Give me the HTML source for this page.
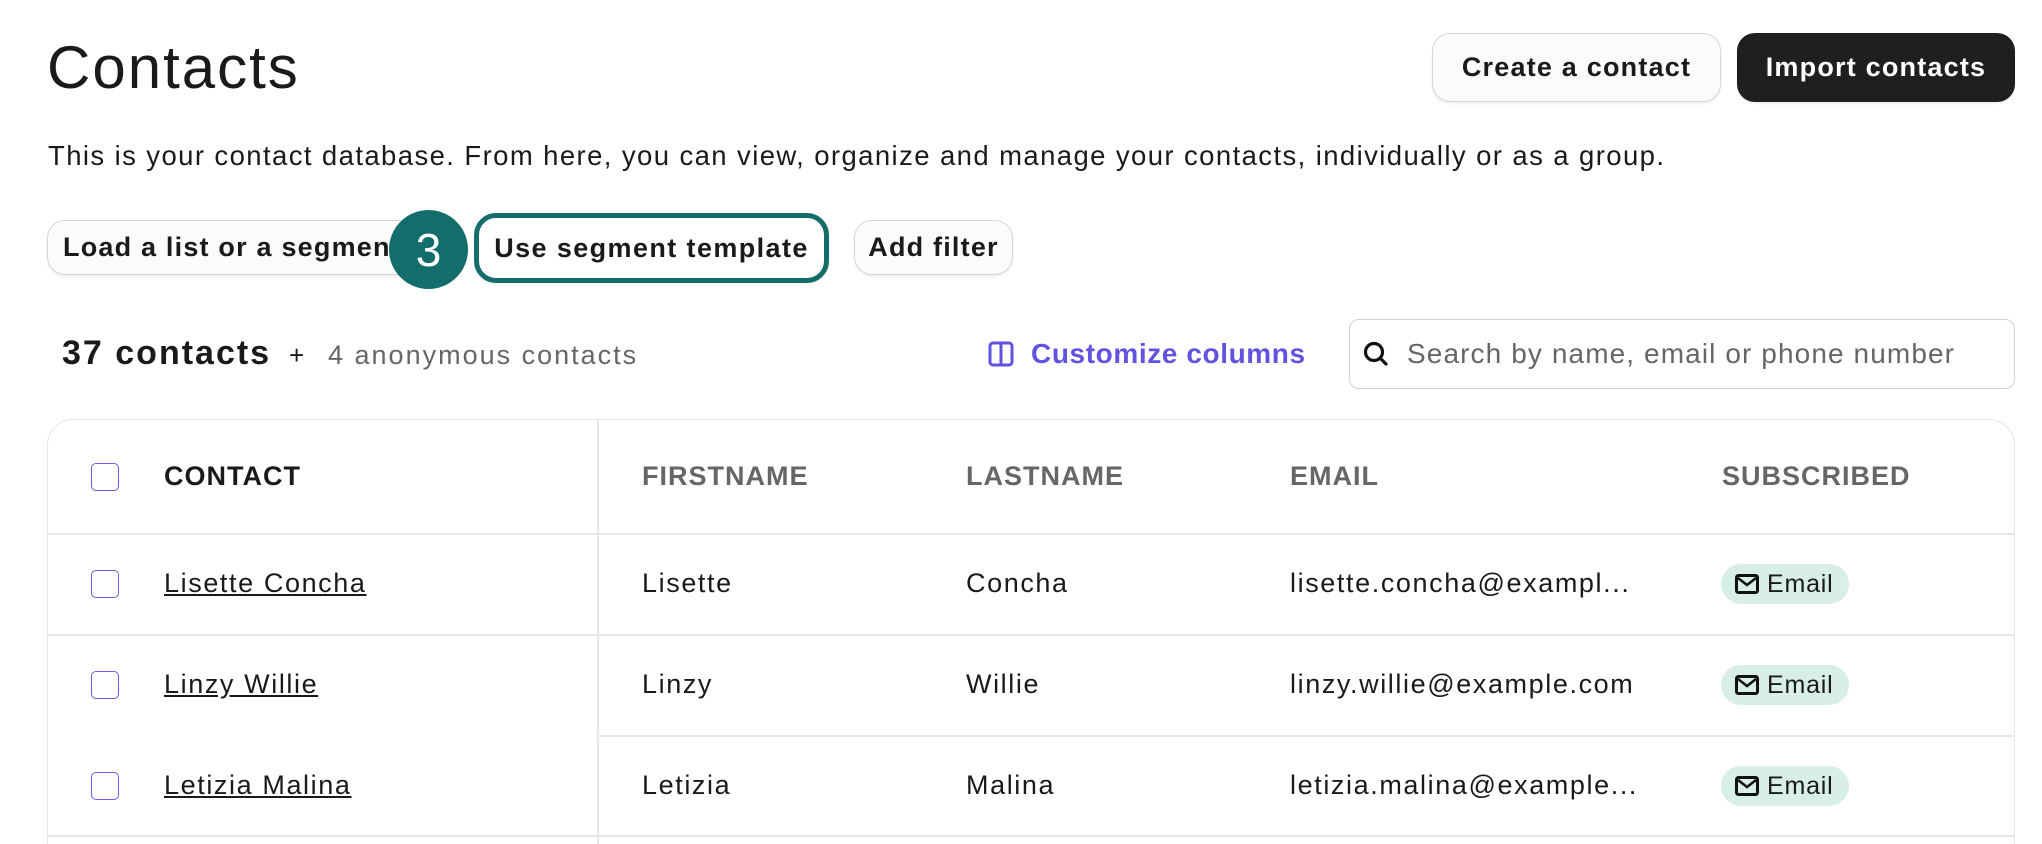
<!DOCTYPE html>
<html><head><meta charset="utf-8"><style>
*{box-sizing:border-box;margin:0;padding:0}
html,body{width:2042px;height:844px;overflow:hidden}
body{background:#fff;font-family:"Liberation Sans",Arial,sans-serif;color:#1a1a1a}
#w{position:relative;width:2042px;height:844px;overflow:hidden}
.a{position:absolute;white-space:nowrap}
.btn{position:absolute;border:1.5px solid #d6d6d6;border-radius:18px;background:#fbfbfb;font-weight:bold;font-size:27px;letter-spacing:1.2px;display:flex;align-items:center;justify-content:center;box-shadow:0 2px 2px rgba(0,0,0,.06);white-space:nowrap}
.cb{position:absolute;width:28px;height:28px;border:1.5px solid #6b5ce7;border-radius:5px;left:91px}
.h{position:absolute;top:461px;font-weight:bold;font-size:27px;color:#666;letter-spacing:1px}
.t{position:absolute;font-size:27px;letter-spacing:1.6px;white-space:nowrap}
.line{position:absolute;height:2px;background:#e6e6e6}
.badge{position:absolute;left:1721px;width:128px;height:40px;border-radius:20px;background:#d7efe6;font-size:25px;letter-spacing:0.8px;display:flex;align-items:center;padding-left:14px}
.badge svg{margin-right:8px}
</style></head><body><div id="w">
<div class="a" style="left:47px;top:33px;font-size:60px;letter-spacing:2px">Contacts</div>
<div class="btn" style="left:1432px;top:33px;width:289px;height:69px">Create a contact</div>
<div class="btn" style="left:1737px;top:33px;width:278px;height:69px;background:#1f1f1f;color:#fff;border-color:#1f1f1f">Import contacts</div>
<div class="a" style="left:48px;top:140px;font-size:27.5px;letter-spacing:1.4px">This is your contact database. From here, you can view, organize and manage your contacts, individually or as a group.</div>

<div class="btn" style="left:47px;top:220px;width:370px;height:55px;justify-content:flex-start;padding-left:15px;overflow:hidden">Load a list or a segment</div>
<div class="a" style="left:389px;top:210px;width:79px;height:79px;border-radius:50%;background:#136e6b;color:#fff;font-size:46px;display:flex;align-items:center;justify-content:center">3</div>
<div class="btn" style="left:474px;top:213px;width:355px;height:70px;border:5px solid #136e6b;border-radius:22px;background:#fff;letter-spacing:1.4px">Use segment template</div>
<div class="btn" style="left:854px;top:220px;width:159px;height:55px">Add filter</div>

<div class="a" style="left:62px;top:334px;font-size:34px;font-weight:bold;letter-spacing:2px">37 contacts</div>
<div class="a" style="left:289px;top:340px;font-size:26px">+</div>
<div class="a" style="left:328px;top:340px;font-size:27px;color:#666;letter-spacing:2px">4 anonymous contacts</div>
<svg class="a" style="left:988px;top:341px" width="26" height="26" viewBox="0 0 26 26"><rect x="2" y="2" width="22" height="22" rx="3" fill="none" stroke="#6153e0" stroke-width="3"/><line x1="13" y1="2" x2="13" y2="24" stroke="#6153e0" stroke-width="3"/></svg>
<div class="a" style="left:1031px;top:338px;font-size:28px;font-weight:bold;color:#6153e0;letter-spacing:0.6px">Customize columns</div>
<div class="a" style="left:1349px;top:319px;width:666px;height:70px;border:1.5px solid #d0d0d0;border-radius:10px"></div>
<svg class="a" style="left:1362px;top:340px" width="28" height="28" viewBox="0 0 28 28"><circle cx="12" cy="12" r="8.5" fill="none" stroke="#111" stroke-width="3.2"/><line x1="18" y1="18" x2="24" y2="24" stroke="#111" stroke-width="3.2" stroke-linecap="round"/></svg>
<div class="a" style="left:1407px;top:338px;font-size:28px;color:#666;letter-spacing:1.1px">Search by name, email or phone number</div>

<div class="a" style="left:47px;top:419px;width:1968px;height:425px;border:1.5px solid #e6e6e6;border-bottom:none;border-radius:26px 26px 0 0"></div>
<div class="a" style="left:597px;top:420px;width:1.5px;height:424px;background:#e6e6e6"></div>
<div class="line" style="left:47px;width:1968px;top:533px"></div>
<div class="line" style="left:47px;width:1968px;top:634px"></div>
<div class="line" style="left:598px;width:1417px;top:735px"></div>
<div class="line" style="left:47px;width:1968px;top:835px"></div>

<div class="cb" style="top:463px"></div>
<div class="h" style="left:164px;color:#1a1a1a">CONTACT</div>
<div class="h" style="left:642px">FIRSTNAME</div>
<div class="h" style="left:966px">LASTNAME</div>
<div class="h" style="left:1290px">EMAIL</div>
<div class="h" style="left:1722px">SUBSCRIBED</div>

<div class="cb" style="top:570px"></div>
<div class="t" style="left:164px;top:568px;text-decoration:underline">Lisette Concha</div>
<div class="t" style="left:642px;top:568px">Lisette</div>
<div class="t" style="left:966px;top:568px">Concha</div>
<div class="t" style="left:1290px;top:568px">lisette.concha@exampl...</div>
<div class="badge" style="top:564px"><svg width="24" height="20" viewBox="0 0 24 20"><rect x="1.5" y="1.5" width="21" height="17" rx="2" fill="none" stroke="#111" stroke-width="3"/><path d="M3 4l9 7 9-7" fill="none" stroke="#111" stroke-width="2.5"/></svg>Email</div>

<div class="cb" style="top:671px"></div>
<div class="t" style="left:164px;top:669px;text-decoration:underline">Linzy Willie</div>
<div class="t" style="left:642px;top:669px">Linzy</div>
<div class="t" style="left:966px;top:669px">Willie</div>
<div class="t" style="left:1290px;top:669px">linzy.willie@example.com</div>
<div class="badge" style="top:665px"><svg width="24" height="20" viewBox="0 0 24 20"><rect x="1.5" y="1.5" width="21" height="17" rx="2" fill="none" stroke="#111" stroke-width="3"/><path d="M3 4l9 7 9-7" fill="none" stroke="#111" stroke-width="2.5"/></svg>Email</div>

<div class="cb" style="top:772px"></div>
<div class="t" style="left:164px;top:770px;text-decoration:underline">Letizia Malina</div>
<div class="t" style="left:642px;top:770px">Letizia</div>
<div class="t" style="left:966px;top:770px">Malina</div>
<div class="t" style="left:1290px;top:770px">letizia.malina@example...</div>
<div class="badge" style="top:766px"><svg width="24" height="20" viewBox="0 0 24 20"><rect x="1.5" y="1.5" width="21" height="17" rx="2" fill="none" stroke="#111" stroke-width="3"/><path d="M3 4l9 7 9-7" fill="none" stroke="#111" stroke-width="2.5"/></svg>Email</div>
</div></body></html>
